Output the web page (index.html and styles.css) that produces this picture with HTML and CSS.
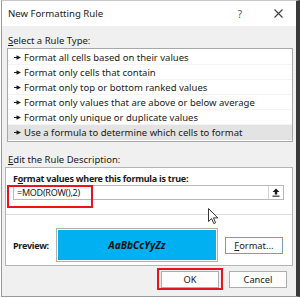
FILE: index.html
```html
<!DOCTYPE html>
<html>
<head>
<meta charset="utf-8">
<link rel="stylesheet" href="styles.css">
</head>
<body>
<div class="dialog">
  <div class="titlebar">
    <span class="title">New Formatting Rule</span>
    <span class="help">?</span>
    <svg class="close" width="9" height="9" viewBox="0 0 9 9"><path d="M0.5 0.5L8.5 8.5M8.5 0.5L0.5 8.5" stroke="#404040" stroke-width="1.1" fill="none"/></svg>
  </div>
  <div class="body">
    <div class="label label-first"><u>S</u>elect a Rule Type:</div>
    <ul class="rules">
      <li><svg class="tri" width="7" height="5" viewBox="0 0 7 5"><path d="M2.5 0.3L7 2.5L2.5 4.7Z M0 2H3V3H0Z" fill="#1a1a1a"/></svg>Format all cells based on their values</li>
      <li><svg class="tri" width="7" height="5" viewBox="0 0 7 5"><path d="M2.5 0.3L7 2.5L2.5 4.7Z M0 2H3V3H0Z" fill="#1a1a1a"/></svg>Format only cells that contain</li>
      <li><svg class="tri" width="7" height="5" viewBox="0 0 7 5"><path d="M2.5 0.3L7 2.5L2.5 4.7Z M0 2H3V3H0Z" fill="#1a1a1a"/></svg>Format only top or bottom ranked values</li>
      <li><svg class="tri" width="7" height="5" viewBox="0 0 7 5"><path d="M2.5 0.3L7 2.5L2.5 4.7Z M0 2H3V3H0Z" fill="#1a1a1a"/></svg>Format only values that are above or below average</li>
      <li><svg class="tri" width="7" height="5" viewBox="0 0 7 5"><path d="M2.5 0.3L7 2.5L2.5 4.7Z M0 2H3V3H0Z" fill="#1a1a1a"/></svg>Format only unique or duplicate values</li>
      <li class="selected"><svg class="tri" width="7" height="5" viewBox="0 0 7 5"><path d="M2.5 0.3L7 2.5L2.5 4.7Z M0 2H3V3H0Z" fill="#1a1a1a"/></svg>Use a formula to determine which cells to format</li>
    </ul>
    <div class="label label-second"><u>E</u>dit the Rule Description:</div>
    <div class="desc">
      <div class="formula-section">
        <div class="bold">F<u>o</u>rmat values where this formula is true:</div>
        <div class="input-row">
          <div class="input">=MOD(ROW(),2)</div>
          <div class="collapse">
            <svg width="8" height="9" viewBox="0 0 8 9"><path d="M4 0.5L7.5 4H5.2V6.6H2.8V4H0.5Z" fill="#1a1a1a"/><rect x="0.5" y="7.6" width="7" height="1.1" fill="#1a1a1a"/></svg>
          </div>
        </div>
        <div class="mark mark-formula"></div>
      </div>
      <div class="preview-section">
        <span class="bold">Preview:</span>
        <div class="preview"><span>AaBbCcYyZz</span></div>
        <button class="btn btn-format"><u>F</u>ormat...</button>
      </div>
      <svg class="cursor" width="11" height="17" viewBox="0 0 11 17"><path d="M0.5 0.5V13.5L3.6 10.6L5.8 15.6L7.6 14.8L5.5 9.9H9.8Z" fill="#fff" stroke="#222" stroke-width="0.9" stroke-linejoin="round"/></svg>
    </div>
    <div class="buttons">
      <div class="ok-wrap">
        <button class="btn">OK</button>
        <div class="mark mark-ok"></div>
      </div>
      <button class="btn">Cancel</button>
    </div>
  </div>
</div>
</body>
</html>
```
FILE: styles.css
```css
* { box-sizing: border-box; }
html, body { margin: 0; padding: 0; background: #ffffff; }
body {
  width: 300px;
  height: 298px;
  overflow: hidden;
  font-family: "Noto Sans", "Segoe UI", sans-serif;
  color: #1a1a1a;
}
.dialog {
  margin-left: 1px;
  width: 299px;
  height: 297px;
  border-left: 1px solid #9a9a9a;
  border-right: 4px solid #3a3a3a;
  border-bottom: 1px solid #9a9a9a;
  border-top: 1px solid #c8c8c8;
  display: flex;
  flex-direction: column;
}
.titlebar {
  height: 25px;
  flex: none;
  background: #ffffff;
  display: flex;
  align-items: center;
  padding-left: 6px;
}
.title {
  font-size: 9.6px;
  flex: 1;
}
.help {
  font-size: 10px;
  color: #505050;
  margin-right: 32px;
}
.close { margin-right: 13px; }
.body {
  flex: 1;
  background: #f0f0f0;
  padding: 0 3px 0 3px;
  display: flex;
  flex-direction: column;
}
.label {
  font-size: 9.5px;
  height: 14px;
  line-height: 14px;
  padding-left: 3px;
}
.label-first { margin-top: 8px; }
.label-second { margin-top: 11px; }
.rules {
  list-style: none;
  margin: 0 0 0 2px;
  padding: 1px 0 1px 0;
  background: #ffffff;
  border: 1px solid #a8a8a8;
  width: 286px;
}
.rules li {
  height: 15px;
  line-height: 15px;
  font-size: 9.5px;
  padding-left: 6px;
  white-space: nowrap;
  border-bottom: 1px solid #f4f4f4;
  display: flex;
  align-items: center;
}
.rules li:last-child { border-bottom: none; }
.rules li.selected { background: #e3e3e3; }
.tri {
  flex: none;
  margin-right: 3px;
}
.desc {
  position: relative;
  background: #ffffff;
  border: 1px solid #b4b4b4;
  width: 288px;
  display: flex;
  flex-direction: column;
}
.formula-section {
  position: relative;
  padding: 4px 8px 14px 7px;
  border-bottom: 1px solid #dcdcdc;
}
.bold {
  font-weight: 700;
  font-size: 9px;
  letter-spacing: -0.25px;
  line-height: 13px;
  height: 13px;
  white-space: nowrap;
}
.input-row {
  display: flex;
  height: 15px;
  border: 1px solid #b8b8b8;
}
.input {
  flex: 1;
  font-size: 9px;
  letter-spacing: -0.25px;
  line-height: 13px;
  padding-left: 3px;
}
.collapse {
  width: 15px;
  display: flex;
  align-items: center;
  justify-content: center;
  border-left: 1px solid #d4d4d4;
}
.mark {
  position: absolute;
  border: 2px solid #e8141c;
}
.mark-formula {
  left: 1px;
  top: 17px;
  width: 86px;
  height: 23px;
}
.preview-section {
  display: flex;
  align-items: center;
  padding: 12px 0 2px 7px;
  height: 50px;
}
.preview {
  margin-left: 7px;
  width: 162px;
  height: 34px;
  border: 1px solid #b0b0b0;
  padding: 1px;
  display: flex;
}
.preview span {
  flex: 1;
  background: #00b0f0;
  display: flex;
  align-items: center;
  justify-content: center;
  font-weight: 700;
  font-style: italic;
  font-size: 10.2px;
  color: #101010;
}
.btn {
  font-family: "Noto Sans", "Segoe UI", sans-serif;
  font-size: 9.3px;
  color: #1a1a1a;
  background: #fdfdfd;
  border: 1px solid #adadad;
  width: 58px;
  height: 17px;
  padding: 0;
  display: flex;
  align-items: center;
  justify-content: center;
}
.btn-format {
  margin-left: 7px;
  border-color: #7a9cc4;
}
.cursor {
  position: absolute;
  left: 202px;
  top: 40px;
}
.buttons {
  display: flex;
  justify-content: flex-end;
  gap: 10px;
  margin-top: 5px;
  padding-right: 6px;
}
.ok-wrap { position: relative; display: flex; }
.mark-ok {
  left: -4px;
  top: -3px;
  width: 66px;
  height: 22px;
}
```
